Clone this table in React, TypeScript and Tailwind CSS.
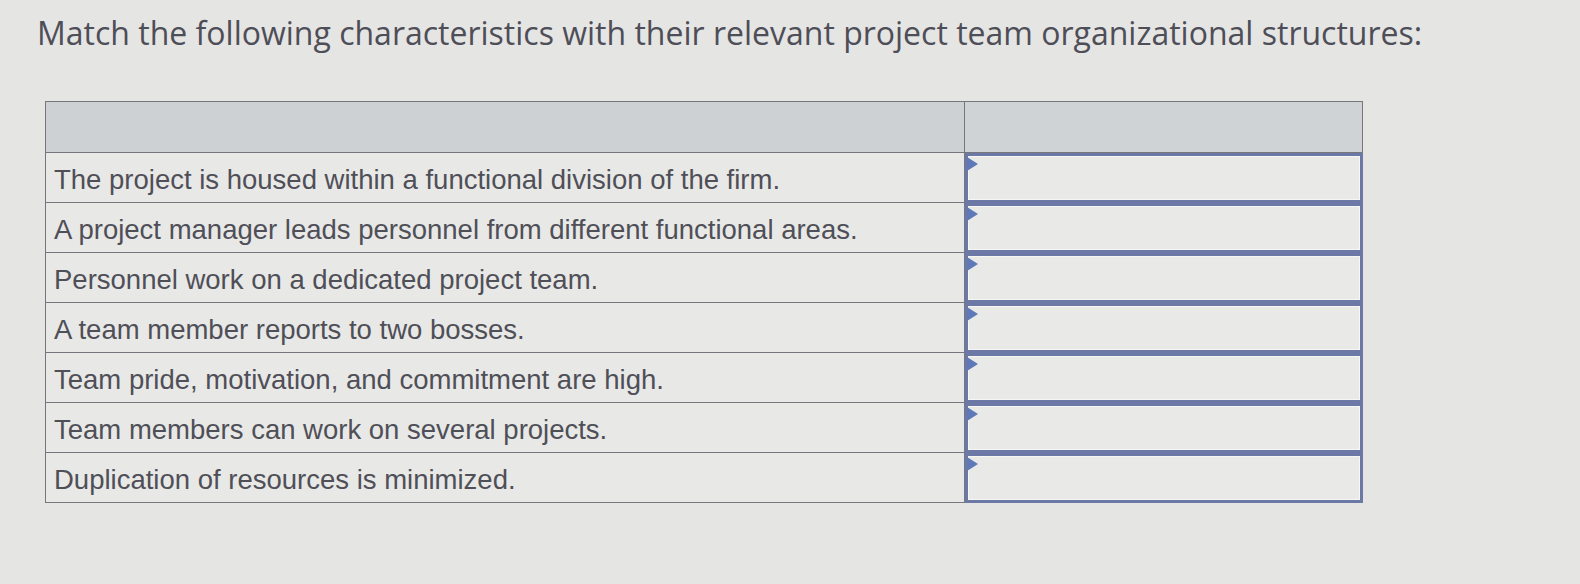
const rows = [
  "The project is housed within a functional division of the firm.",
  "A project manager leads personnel from different functional areas.",
  "Personnel work on a dedicated project team.",
  "A team member reports to two bosses.",
  "Team pride, motivation, and commitment are high.",
  "Team members can work on several projects.",
  "Duplication of resources is minimized.",
];

function AnswerBox() {
  return (
    <div className="relative h-full bg-[#6c78a6] p-[3px]">
      <div className="h-full bg-[#e9e9e7] shadow-[inset_0_0_0_1px_#f6f6f4]" />
      <svg className="absolute left-[2px] top-[4px]" width="11" height="14" viewBox="0 0 11 14">
        <path d="M0 0 L11 7 L0 14 Z" fill="#5f78b8" />
      </svg>
    </div>
  );
}

export default function App() {
  return (
    <div className="h-[584px] w-[1580px] bg-[#e5e5e3] font-['Open_Sans',sans-serif]">
      <h1 className="pl-[37px] pt-[10px] text-[32px] leading-[46px] text-[#4e4e58]">
        Match the following characteristics with their relevant project team organizational structures:
      </h1>
      <div className="ml-[45px] mt-[45px] grid w-[1318px] grid-cols-[920px_398px] font-['Liberation_Sans',Arial,sans-serif]">
        <div className="h-[52px] border-[1.5px] border-[#76767c] bg-[#cdd1d4]" />
        <div className="h-[52px] border-[1.5px] border-l-0 border-[#76767c] bg-[#cfd3d5]" />
        {rows.map((text) => (
          <>
            <div
              key={text}
              className="flex h-[50px] items-center border-[1.5px] border-t-0 border-[#76767c] bg-[#e8e8e6] pl-[8px] pt-[4px] text-[27.5px] text-[#4f4f58]"
            >
              {text}
            </div>
            <div key={text + "-a"} className="h-[50px]">
              <AnswerBox />
            </div>
          </>
        ))}
      </div>
    </div>
  );
}
